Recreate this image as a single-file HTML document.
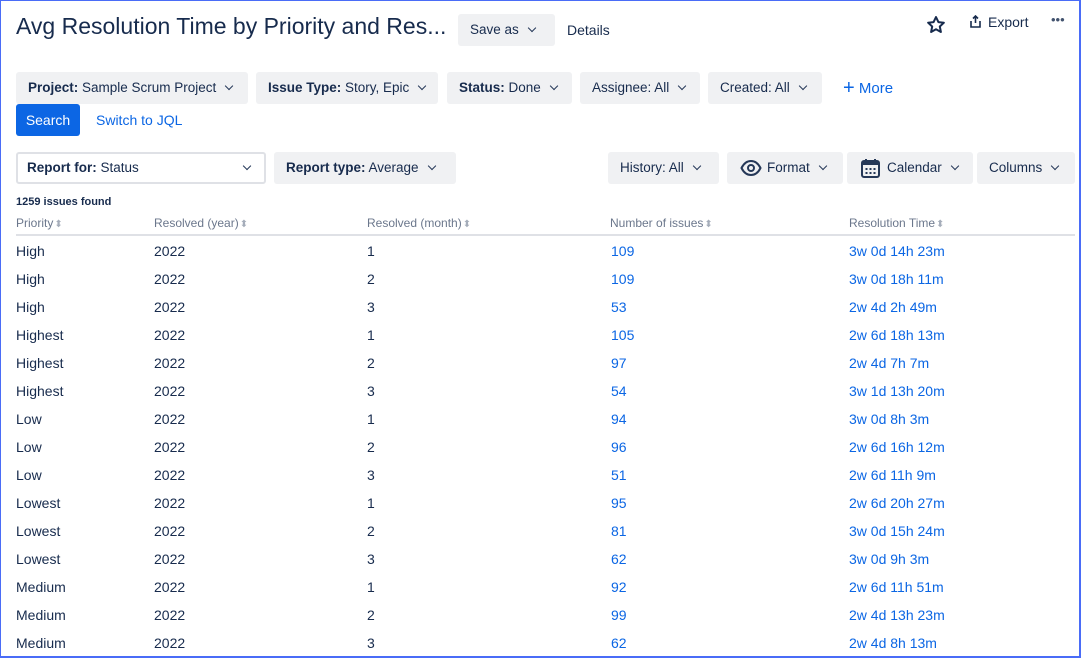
<!DOCTYPE html>
<html><head><meta charset="utf-8"><style>
*{box-sizing:border-box;margin:0;padding:0}
body{width:1081px;height:658px;overflow:hidden;background:#fff;font-family:"Liberation Sans",sans-serif;color:#172b4d;position:relative}
.frame{position:absolute;left:0;top:0;width:1081px;height:658px;border:1px solid #4a6cf7;border-right:2px solid #4a6cf7;border-bottom:2px solid #4a6cf7;pointer-events:none}
.abs{position:absolute}
.btn{position:absolute;height:32px;background:#f0f1f3;border-radius:3px;font-size:13.5px;line-height:32px;padding-left:12px;color:#172b4d;white-space:nowrap}
.btn b{font-weight:bold}
.chev{display:inline-block;width:6px;height:6px;border-right:1.6px solid #253858;border-bottom:1.6px solid #253858;transform:rotate(45deg);margin-left:10px;position:relative;top:-3px}
.hd{position:absolute;top:216px;font-size:12px;color:#6b778c}
.hd:after{content:"";display:inline-block;width:6px;height:9px;margin-left:2px;vertical-align:-1px;background:linear-gradient(#fff,#fff) 0 4px/6px 1px no-repeat;border-left:3px solid transparent;border-right:3px solid transparent;position:relative}
.hd i{font-style:normal;font-size:10px;color:#a5adba;margin-left:1px}
.row{position:absolute;left:16px;width:1059px;height:28px;font-size:14px;line-height:28px}
.row span{position:absolute}
.row .l{color:#0b66e4}
</style></head><body>
<div class="abs" style="left:16px;top:13px;font-size:23px;color:#172b4d">Avg Resolution Time by Priority and Res...</div>
<div class="btn" style="left:458px;top:14px;width:97px">Save as<span class="chev"></span></div>
<div class="abs" style="left:567px;top:22px;font-size:14px">Details</div>
<svg class="abs" style="left:926px;top:15px" width="20" height="20" viewBox="0 0 20 20"><path d="M10 2l2.4 5.1 5.5.6-4.1 3.8 1.1 5.5L10 14.3 5.1 17l1.1-5.5L2.1 7.7l5.5-.6z" fill="none" stroke="#172b4d" stroke-width="2" stroke-linejoin="round"/></svg>
<svg class="abs" style="left:970px;top:15px" width="11" height="13" viewBox="0 0 11 13"><path d="M5.5 1v7M3 3.5l2.5-2.5 2.5 2.5M1 6v6h9V6" fill="none" stroke="#172b4d" stroke-width="1.6"/></svg>
<div class="abs" style="left:988px;top:14px;font-size:14px">Export</div>
<div class="abs" style="left:1051px;top:12px;font-size:13px;color:#42526e">•••</div>

<div class="btn" style="left:16px;top:72px;width:232px"><b>Project:</b> Sample Scrum Project<span class="chev"></span></div>
<div class="btn" style="left:256px;top:72px;width:182px"><b>Issue Type:</b> Story, Epic<span class="chev"></span></div>
<div class="btn" style="left:447px;top:72px;width:125px"><b>Status:</b> Done<span class="chev"></span></div>
<div class="btn" style="left:580px;top:72px;width:120px">Assignee: All<span class="chev"></span></div>
<div class="btn" style="left:708px;top:72px;width:114px">Created: All<span class="chev"></span></div>
<div class="abs" style="left:843px;top:78px;font-size:15px;color:#0b66e4"><span style="font-size:20px;line-height:18px;position:relative;top:1px">+</span> More</div>
<div class="abs" style="left:16px;top:104px;width:64px;height:32px;background:#0c66e4;border-radius:3px;color:#fff;font-size:14px;line-height:32px;text-align:center">Search</div>
<div class="abs" style="left:96px;top:112px;font-size:14px;color:#0b66e4">Switch to JQL</div>

<div class="abs" style="left:16px;top:152px;width:250px;height:32px;border:2px solid #dfe1e6;border-radius:3px;font-size:13.5px;line-height:28px;padding-left:9px"><b>Report for:</b> Status<span style="position:absolute;left:226px;top:9px;width:6px;height:6px;border-right:1.6px solid #253858;border-bottom:1.6px solid #253858;transform:rotate(45deg)"></span></div>
<div class="btn" style="left:274px;top:152px;width:182px"><b>Report type:</b> Average<span class="chev"></span></div>
<div class="btn" style="left:608px;top:152px;width:111px">History: All<span class="chev"></span></div>
<div class="btn" style="left:727px;top:152px;width:116px;padding-left:40px"><svg class="abs" style="left:13px;top:7px" width="22" height="18" viewBox="0 0 22 18"><path d="M1.5 9C4 4 7.5 2 11 2s7 2 9.5 7c-2.5 5-6 7-9.5 7S4 14 1.5 9z" fill="none" stroke="#253858" stroke-width="2"/><circle cx="11" cy="9" r="3" fill="none" stroke="#253858" stroke-width="2"/></svg>Format<span class="chev"></span></div>
<div class="btn" style="left:847px;top:152px;width:126px;padding-left:40px"><svg class="abs" style="left:14px;top:6px" width="19" height="20" viewBox="0 0 19 20"><rect x="1" y="3" width="17" height="16" rx="2" fill="none" stroke="#253858" stroke-width="2"/><rect x="1" y="3" width="17" height="4" fill="#253858"/><path d="M5 1v4M14 1v4" stroke="#253858" stroke-width="2"/><g fill="#253858"><rect x="4.5" y="10" width="2" height="2"/><rect x="8.5" y="10" width="2" height="2"/><rect x="12.5" y="10" width="2" height="2"/><rect x="4.5" y="14" width="2" height="2"/><rect x="8.5" y="14" width="2" height="2"/><rect x="12.5" y="14" width="2" height="2"/></g></svg>Calendar<span class="chev"></span></div>
<div class="btn" style="left:977px;top:152px;width:98px">Columns<span class="chev"></span></div>

<div class="abs" style="left:16px;top:196px;font-size:11px;font-weight:bold">1259 issues found</div>
<div class="hd" style="left:16px">Priority<i>⬍</i></div>
<div class="hd" style="left:154px">Resolved (year)<i>⬍</i></div>
<div class="hd" style="left:367px">Resolved (month)<i>⬍</i></div>
<div class="hd" style="left:610px">Number of issues<i>⬍</i></div>
<div class="hd" style="left:849px">Resolution Time<i>⬍</i></div>
<div class="abs" style="left:16px;top:234px;width:1059px;height:2px;background:#dfe1e6"></div>

<div class="row" style="top:237px"><span style="left:0">High</span><span style="left:138px">2022</span><span style="left:351px">1</span><span class="l" style="left:595px">109</span><span class="l" style="left:833px">3w 0d 14h 23m</span></div>
<div class="row" style="top:265px"><span style="left:0">High</span><span style="left:138px">2022</span><span style="left:351px">2</span><span class="l" style="left:595px">109</span><span class="l" style="left:833px">3w 0d 18h 11m</span></div>
<div class="row" style="top:293px"><span style="left:0">High</span><span style="left:138px">2022</span><span style="left:351px">3</span><span class="l" style="left:595px">53</span><span class="l" style="left:833px">2w 4d 2h 49m</span></div>
<div class="row" style="top:321px"><span style="left:0">Highest</span><span style="left:138px">2022</span><span style="left:351px">1</span><span class="l" style="left:595px">105</span><span class="l" style="left:833px">2w 6d 18h 13m</span></div>
<div class="row" style="top:349px"><span style="left:0">Highest</span><span style="left:138px">2022</span><span style="left:351px">2</span><span class="l" style="left:595px">97</span><span class="l" style="left:833px">2w 4d 7h 7m</span></div>
<div class="row" style="top:377px"><span style="left:0">Highest</span><span style="left:138px">2022</span><span style="left:351px">3</span><span class="l" style="left:595px">54</span><span class="l" style="left:833px">3w 1d 13h 20m</span></div>
<div class="row" style="top:405px"><span style="left:0">Low</span><span style="left:138px">2022</span><span style="left:351px">1</span><span class="l" style="left:595px">94</span><span class="l" style="left:833px">3w 0d 8h 3m</span></div>
<div class="row" style="top:433px"><span style="left:0">Low</span><span style="left:138px">2022</span><span style="left:351px">2</span><span class="l" style="left:595px">96</span><span class="l" style="left:833px">2w 6d 16h 12m</span></div>
<div class="row" style="top:461px"><span style="left:0">Low</span><span style="left:138px">2022</span><span style="left:351px">3</span><span class="l" style="left:595px">51</span><span class="l" style="left:833px">2w 6d 11h 9m</span></div>
<div class="row" style="top:489px"><span style="left:0">Lowest</span><span style="left:138px">2022</span><span style="left:351px">1</span><span class="l" style="left:595px">95</span><span class="l" style="left:833px">2w 6d 20h 27m</span></div>
<div class="row" style="top:517px"><span style="left:0">Lowest</span><span style="left:138px">2022</span><span style="left:351px">2</span><span class="l" style="left:595px">81</span><span class="l" style="left:833px">3w 0d 15h 24m</span></div>
<div class="row" style="top:545px"><span style="left:0">Lowest</span><span style="left:138px">2022</span><span style="left:351px">3</span><span class="l" style="left:595px">62</span><span class="l" style="left:833px">3w 0d 9h 3m</span></div>
<div class="row" style="top:573px"><span style="left:0">Medium</span><span style="left:138px">2022</span><span style="left:351px">1</span><span class="l" style="left:595px">92</span><span class="l" style="left:833px">2w 6d 11h 51m</span></div>
<div class="row" style="top:601px"><span style="left:0">Medium</span><span style="left:138px">2022</span><span style="left:351px">2</span><span class="l" style="left:595px">99</span><span class="l" style="left:833px">2w 4d 13h 23m</span></div>
<div class="row" style="top:629px"><span style="left:0">Medium</span><span style="left:138px">2022</span><span style="left:351px">3</span><span class="l" style="left:595px">62</span><span class="l" style="left:833px">2w 4d 8h 13m</span></div>
<div class="frame"></div>
</body></html>
